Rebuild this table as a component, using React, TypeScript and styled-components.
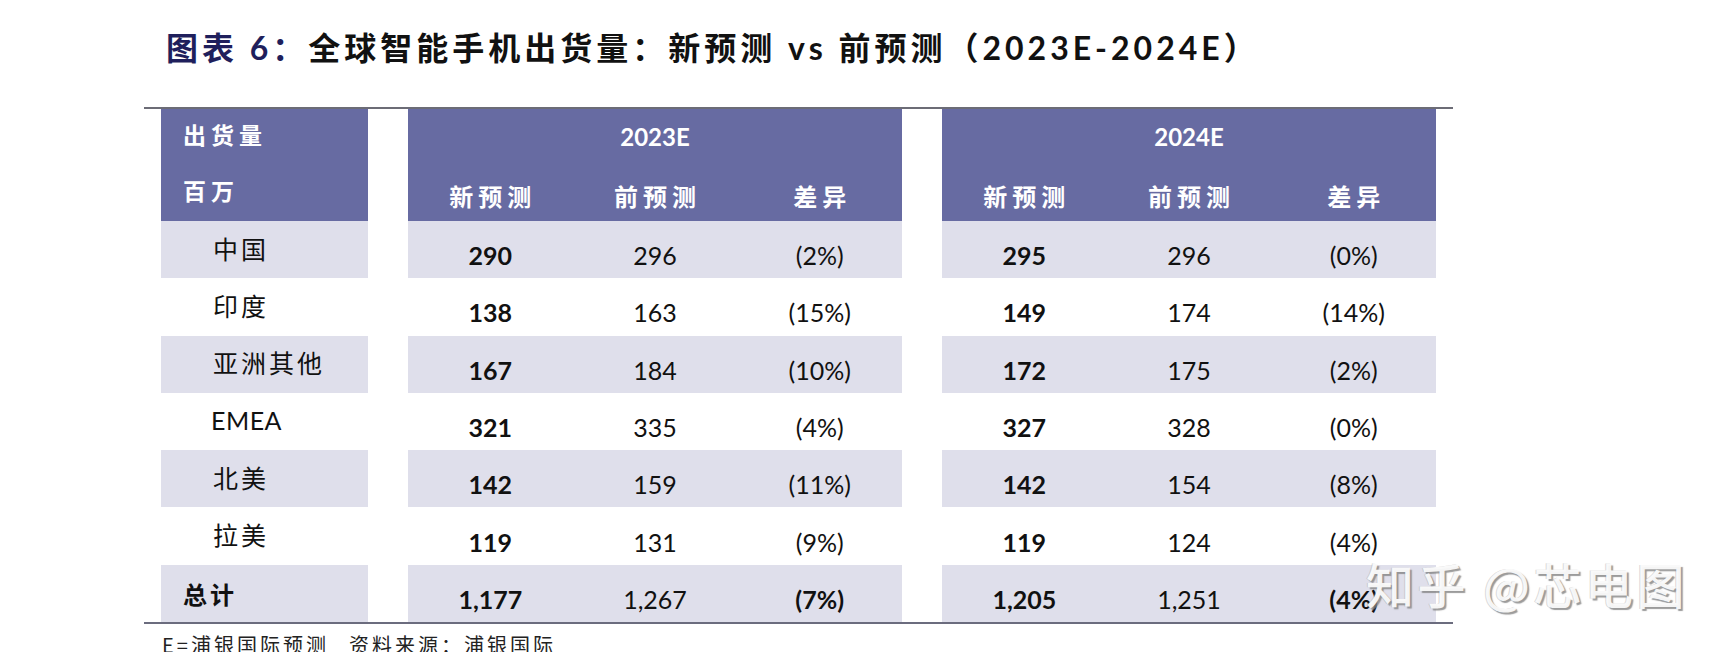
import styled, { createGlobalStyle } from "styled-components";

const GlobalStyle = createGlobalStyle`
    html, body {
        margin: 0;
        padding: 0;
        background: #ffffff;
        overflow: hidden;
    }
`

type DataRow = {
    label: string
    values: string[]
    total?: boolean
}

const rows: DataRow[] = [
    { label: "中国", values: ["290", "296", "(2%)", "295", "296", "(0%)"] },
    { label: "印度", values: ["138", "163", "(15%)", "149", "174", "(14%)"] },
    { label: "亚洲其他", values: ["167", "184", "(10%)", "172", "175", "(2%)"] },
    { label: "EMEA", values: ["321", "335", "(4%)", "327", "328", "(0%)"] },
    { label: "北美", values: ["142", "159", "(11%)", "142", "154", "(8%)"] },
    { label: "拉美", values: ["119", "131", "(9%)", "119", "124", "(4%)"] },
    { label: "总计", values: ["1,177", "1,267", "(7%)", "1,205", "1,251", "(4%)"], total: true },
]

const years = ["2023E", "2024E"]
const subHeads = ["新预测", "前预测", "差异"]

export default function App() {
    return (
        <Page>
            <GlobalStyle />
            <Title>
                <TitleTag>图表 6：</TitleTag>全球智能手机出货量：新预测 vs 前预测（2023E-2024E）
            </Title>
            <Table>
                <Line>
                    <HeadLabel>
                        <HeadText>出货量</HeadText>
                        <HeadText>百万</HeadText>
                    </HeadLabel>
                    {years.map((year) => (
                        <HeadBlock key={year}>
                            <Year>{year}</Year>
                            {subHeads.map((s) => (
                                <SubHead key={s}>{s}</SubHead>
                            ))}
                        </HeadBlock>
                    ))}
                </Line>
                {rows.map((row, i) => (
                    <Line key={row.label}>
                        <Label
                            $shade={i % 2 === 0}
                            $total={!!row.total}
                            $latin={/^[A-Z]+$/.test(row.label)}
                        >
                            {row.label}
                        </Label>
                        {[0, 1].map((b) => (
                            <Block key={b} $shade={i % 2 === 0}>
                                {row.values.slice(b * 3, b * 3 + 3).map((v, j) => (
                                    <Value key={j} $bold={j === 0 || (!!row.total && j === 2)}>{v}</Value>
                                ))}
                            </Block>
                        ))}
                    </Line>
                ))}
            </Table>
            <Footer>
                <span>E=浦银国际预测</span>
                <FooterSource>资料来源：浦银国际</FooterSource>
            </Footer>
            <Watermark>知乎 @芯电图</Watermark>
        </Page>
    )
}

const Page = styled.div`
    position: relative;
    width: 1734px;
    height: 652px;
    overflow: hidden;
    background: #ffffff;
`
const Title = styled.h1`
    margin: 0;
    padding: 27px 0 0 166px;
    height: 80px;
    box-sizing: border-box;
    font-family: "Lato", "Noto Sans CJK SC", sans-serif;
    font-size: 32px;
    font-weight: 700;
    line-height: 42px;
    letter-spacing: 4px;
    color: #111111;
    white-space: nowrap;
`
const TitleTag = styled.span`
    color: #1f1f5c;
`
const Table = styled.div`
    margin: 27px 0 0 144px;
    width: 1309px;
    border-top: 2px solid #6c6c76;
    border-bottom: 2px solid #6b6c7e;
`
const Line = styled.div`
    display: grid;
    grid-template-columns: 207px 494px 494px;
    column-gap: 40px;
    padding-left: 17px;
`
const HeadLabel = styled.div`
    display: grid;
    grid-template-rows: 56px 56px;
    background: #676ba2;
    padding-left: 22px;
`
const HeadText = styled.div`
    display: flex;
    align-items: center;
    padding-bottom: 6px;
    font-family: "Noto Sans CJK SC", sans-serif;
    font-size: 23px;
    font-weight: 700;
    letter-spacing: 5px;
    color: #ffffff;
`
const HeadBlock = styled.div`
    display: grid;
    grid-template-columns: repeat(3, 1fr);
    grid-template-rows: 56px 56px;
    background: #676ba2;
`
const Year = styled.div`
    grid-column: 1 / 4;
    display: flex;
    align-items: center;
    justify-content: center;
    padding-bottom: 2px;
    font-family: "Lato", sans-serif;
    font-size: 24px;
    font-weight: 700;
    color: #ffffff;
`
const SubHead = styled.div`
    display: flex;
    align-items: center;
    justify-content: center;
    padding: 4px 0 0 5px;
    font-family: "Noto Sans CJK SC", sans-serif;
    font-size: 24px;
    font-weight: 700;
    letter-spacing: 5px;
    color: #ffffff;
`
const Label = styled.div<{ $shade: boolean; $total: boolean; $latin: boolean }>`
    height: 57.3px;
    box-sizing: border-box;
    display: flex;
    align-items: center;
    padding-left: ${(p) => (p.$total ? "22px" : p.$latin ? "50px" : "52px")};
    padding-bottom: ${(p) => (p.$total ? "0" : "4px")};
    background: ${(p) => (p.$shade ? "#dfdfeb" : "transparent")};
    font-family: "Lato", "Noto Sans CJK SC", sans-serif;
    font-size: ${(p) => (p.$total ? "24px" : "25px")};
    font-weight: ${(p) => (p.$total ? 700 : 400)};
    letter-spacing: ${(p) => (p.$latin ? "0.5px" : "3px")};
    color: #111111;
`
const Block = styled.div<{ $shade: boolean }>`
    height: 57.3px;
    display: grid;
    grid-template-columns: repeat(3, 1fr);
    background: ${(p) => (p.$shade ? "#dfdfeb" : "transparent")};
`
const Value = styled.div<{ $bold: boolean }>`
    display: flex;
    align-items: center;
    justify-content: center;
    padding-top: 11px;
    font-family: "Lato", sans-serif;
    font-size: 25px;
    font-weight: ${(p) => (p.$bold ? 700 : 400)};
    color: #111111;
`
const Footer = styled.div`
    padding: 6px 0 0 162px;
    font-family: "Noto Sans CJK SC", sans-serif;
    font-size: 20px;
    letter-spacing: 3px;
    color: #222222;
    white-space: nowrap;
`
const FooterSource = styled.span`
    margin-left: 20px;
`
const Watermark = styled.div`
    position: absolute;
    left: 1366px;
    top: 548px;
    font-family: "Noto Sans CJK SC", sans-serif;
    font-size: 48px;
    font-weight: 500;
    letter-spacing: 3.5px;
    color: rgba(252, 252, 252, 0.94);
    text-shadow: 2px 2px 1px rgba(130, 130, 130, 0.8), -1px 0 0 rgba(180, 180, 180, 0.5);
    white-space: nowrap;
`
